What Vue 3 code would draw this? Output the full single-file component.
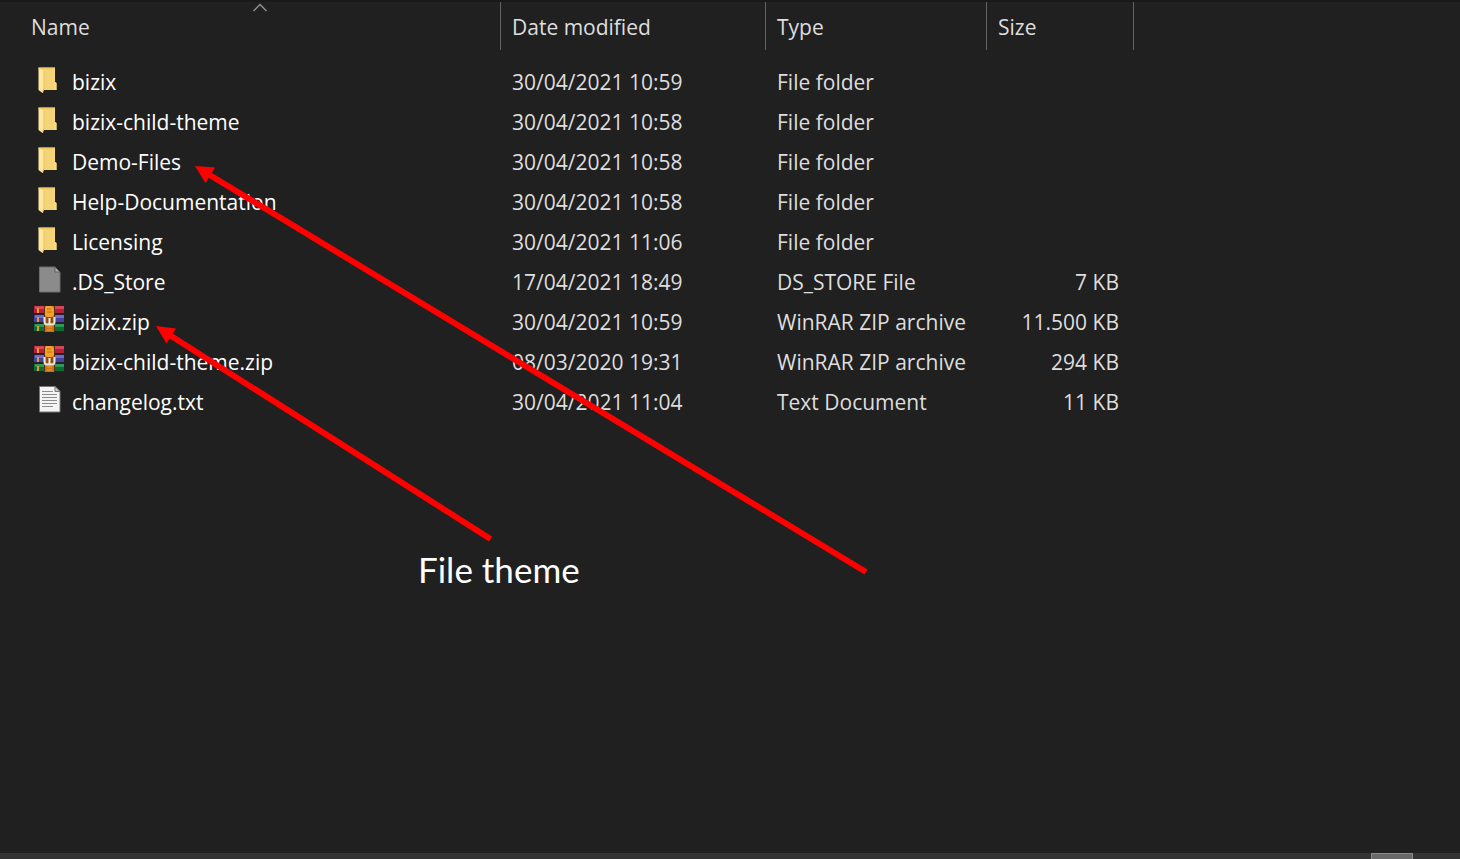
<script setup>
const columns = [
  { key: 'name', label: 'Name' },
  { key: 'date', label: 'Date modified' },
  { key: 'type', label: 'Type' },
  { key: 'size', label: 'Size' },
]

const files = [
  { name: 'bizix', date: '30/04/2021 10:59', type: 'File folder', size: '', icon: 'folder' },
  { name: 'bizix-child-theme', date: '30/04/2021 10:58', type: 'File folder', size: '', icon: 'folder' },
  { name: 'Demo-Files', date: '30/04/2021 10:58', type: 'File folder', size: '', icon: 'folder' },
  { name: 'Help-Documentation', date: '30/04/2021 10:58', type: 'File folder', size: '', icon: 'folder' },
  { name: 'Licensing', date: '30/04/2021 11:06', type: 'File folder', size: '', icon: 'folder' },
  { name: '.DS_Store', date: '17/04/2021 18:49', type: 'DS_STORE File', size: '7 KB', icon: 'file' },
  { name: 'bizix.zip', date: '30/04/2021 10:59', type: 'WinRAR ZIP archive', size: '11.500 KB', icon: 'zip' },
  { name: 'bizix-child-theme.zip', date: '08/03/2020 19:31', type: 'WinRAR ZIP archive', size: '294 KB', icon: 'zip' },
  { name: 'changelog.txt', date: '30/04/2021 11:04', type: 'Text Document', size: '11 KB', icon: 'text' },
]
</script>

<template>
  <main class="explorer">
    <table class="files">
      <colgroup>
        <col class="col-name" />
        <col class="col-date" />
        <col class="col-type" />
        <col class="col-size" />
        <col />
      </colgroup>
      <thead>
        <tr>
          <th v-for="c in columns" :key="c.key" :class="c.key" :aria-sort="c.key === 'name' ? 'ascending' : undefined">
            <button type="button">{{ c.label }}</button>
            <svg v-if="c.key === 'name'" class="caret" width="16" height="10" viewBox="0 0 16 10" aria-hidden="true">
              <path d="M1.5 9 8 2.500l6.500 6.500" fill="none" stroke="#8e8e8e" stroke-width="1.500" />
            </svg>
          </th>
          <td></td>
        </tr>
      </thead>
      <tbody>
        <tr v-for="f in files" :key="f.name">
          <td class="name">
            <div class="entry">
              <svg v-if="f.icon === 'folder'" class="icon" width="32" height="30" viewBox="0 0 32 30" aria-hidden="true">
                <path d="M4.500 2.500h16.500v14.500l1.500 1v7H8z" fill="#f5d478" />
                <path d="M4.500 2.500h16.500v1H4.500z" fill="#e2b650" />
                <path d="M20 3.500h1v13.500l1.500 1V25h-2.500z" fill="#fbdc82" />
                <path d="M4.500 3 10 6v17L8.500 28l-4-3z" fill="#ffe7a0" />
                <path d="M10 6v17L8.500 28" fill="none" stroke="#e9c260" />
              </svg>
              <svg v-else-if="f.icon === 'file'" class="icon" width="32" height="30" viewBox="0 0 32 30" aria-hidden="true">
                <path d="M5.500 2h15.500l5 5v20H5.500z" fill="#8b8b8b" stroke="#6d6d6d" />
                <path d="M21 2v5h5z" fill="#b0b0b0" stroke="#606060" />
              </svg>
              <svg v-else-if="f.icon === 'zip'" class="icon" width="32" height="30" viewBox="0 0 32 30" aria-hidden="true">
                <path d="M0 1h30v8H0z" fill="#b51f3a" />
                <path d="M1 1h29v3H1z" fill="#da4458" />
                <path d="M0 10h30v8H0z" fill="#4643a0" />
                <path d="M1 10h29v3H1z" fill="#6f6ccb" />
                <path d="M0 19h30v8H0z" fill="#0d6b35" />
                <path d="M1 19h29v3H1z" fill="#2c9a55" />
                <path d="M0 8h30v2H0zM0 17h30v2H0zM0 26h30v1H0z" fill="#26202c" />
                <path d="M3 3h2v5H3zM3 12h2v5H3zM3 21h2v5H3z" fill="#e9962e" />
                <path d="M10 1h11v26H10z" fill="#5a3015" />
                <path d="M11 1h9v26h-9z" fill="#cd7115" />
                <path d="M12 1h6l2 3v6l-2 2h-5l-2-2V4z" fill="#f3a12b" />
                <path d="M13 4h4M13 7h5" stroke="#c06c19" />
                <path d="M10.500 12v5q0 2.500 2.500 2.500h5q2.500 0 2.500-2.500v-5" fill="none" stroke="#e5e3de" stroke-width="2" />
                <path d="M12 12h7v6h-7z" fill="#8d4c1b" />
                <path d="M14.500 13h2v6h-2z" fill="#fff1d0" />
                <path d="M13 22h5M13 25h5" stroke="#eea039" />
              </svg>
              <svg v-else class="icon" width="32" height="30" viewBox="0 0 32 30" aria-hidden="true">
                <path d="M5.500 1.500h15.500l5 5v20.500H5.500z" fill="#f4f4f4" stroke="#777" />
                <path d="M21 1.500v5h5z" fill="#cfcfcf" stroke="#777" />
                <path d="M8 6.500h11M8 9.500h15M8 12.500h15M8 15.500h15M8 18.500h15M8 21.500h11" stroke="#8c8c8c" />
              </svg>
              <span>{{ f.name }}</span>
            </div>
          </td>
          <td>{{ f.date }}</td>
          <td>{{ f.type }}</td>
          <td class="size">{{ f.size }}</td>
          <td></td>
        </tr>
      </tbody>
    </table>

    <svg class="arrows" width="900" height="600" viewBox="0 0 900 600" aria-hidden="true">
      <g stroke="#f00" stroke-width="6">
        <path d="M208 174 866 572" />
        <path d="M168 334 490.500 539" />
      </g>
      <g fill="#f00">
        <path d="M195 166 215 167.500 205.500 183z" />
        <path d="M156 326 176 328.500 166.500 343.500z" />
      </g>
    </svg>
    <p class="note">File theme</p>

    <footer class="strip"><span class="thumb"></span></footer>
  </main>
</template>

<style>
body {
  margin: 0;
  background: #202020;
}
</style>

<style scoped>
.explorer {
  position: relative;
  display: flex;
  flex-direction: column;
  box-sizing: border-box;
  min-height: 100vh;
  border-top: 2px solid #191919;
  background: #202020;
  color: #dedede;
  font: 21px/28px "Open Sans", "Noto Sans", sans-serif;
}

.files {
  width: 100%;
  table-layout: fixed;
  border-collapse: separate;
  border-spacing: 0;
}

.col-name { width: 501px; }
.col-date { width: 265px; }
.col-type { width: 221px; }
.col-size { width: 147px; }

th,
td {
  box-sizing: border-box;
  padding: 0 0 0 11px;
  text-align: left;
  font-weight: 400;
  white-space: nowrap;
}

th {
  position: relative;
  height: 48px;
  padding-top: 2px;
  border-right: 1px solid #636363;
}

th.name { padding-left: 31px; }

th button {
  display: block;
  padding: 0;
  border: 0;
  background: none;
  color: inherit;
  font: inherit;
}

.caret {
  position: absolute;
  top: 0;
  left: calc(50% + 2px);
}

thead::after {
  content: "";
  display: block;
  height: 12px;
}

tbody td { height: 40px; }

tbody td.name {
  padding-left: 34px;
  color: #fff;
}

tbody td.size {
  padding-right: 15px;
  text-align: right;
}

.entry {
  display: flex;
  align-items: center;
  gap: 6px;
}

.icon {
  flex: none;
  margin-bottom: 4px;
}

.arrows {
  position: absolute;
  top: -2px;
  left: 0;
  pointer-events: none;
}

.note {
  position: absolute;
  top: 547px;
  left: 418px;
  margin: 0;
  color: #fff;
  font: 35px/40px Lato, sans-serif;
}

.strip {
  display: flex;
  justify-content: flex-end;
  height: 6px;
  margin-top: auto;
  padding-right: 47px;
  background: #333;
}

.thumb {
  box-sizing: border-box;
  width: 42px;
  border: 1px solid #8a8a8a;
  border-bottom: 0;
  background: #696969;
}
</style>
